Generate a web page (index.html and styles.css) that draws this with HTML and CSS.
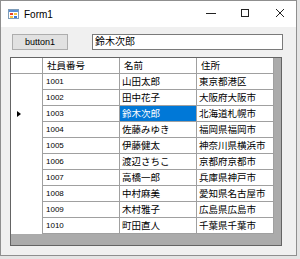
FILE: index.html
```html
<!DOCTYPE html>
<html lang="ja">
<head>
  <meta charset="UTF-8">
  <title>Form1</title>
  <link rel="stylesheet" href="styles.css">
</head>
<body>
  <div class="window">
    <!-- タイトルバー -->
    <div class="titlebar">
      <svg class="app-icon" width="11" height="10" viewBox="0 0 11 10">
        <rect x="0.5" y="0.5" width="10" height="9" fill="#fff" stroke="#7f9db9"/>
        <rect x="1" y="1" width="9" height="2" fill="#5b8fd6"/>
        <rect x="2" y="4" width="3" height="2" fill="#e8412c"/>
        <rect x="6" y="4" width="3" height="2" fill="#f6c244"/>
        <rect x="2" y="7" width="3" height="2" fill="#f6c244"/>
        <rect x="6" y="7" width="3" height="2" fill="#3c78d8"/>
      </svg>
      <span class="title">Form1</span>
      <div class="caption">
        <span class="cap-btn">
          <svg width="10" height="10" viewBox="0 0 10 10"><path d="M0 5.5H10" stroke="#222" stroke-width="1"/></svg>
        </span>
        <span class="cap-btn">
          <svg width="10" height="10" viewBox="0 0 10 10"><rect x="1.5" y="1.5" width="7" height="7" fill="none" stroke="#222" stroke-width="1"/></svg>
        </span>
        <span class="cap-btn">
          <svg width="10" height="10" viewBox="0 0 10 10"><path d="M1 1L9 9M9 1L1 9" stroke="#222" stroke-width="1"/></svg>
        </span>
      </div>
    </div>

    <!-- クライアント領域 -->
    <div class="client">
      <div class="toolbar">
        <button type="button" class="button">button1</button>
        <div class="textbox">鈴木次郎</div>
      </div>

      <div class="grid">
        <div class="rows">
          <div class="cell head corner"></div>
          <div class="cell head">社員番号</div>
          <div class="cell head">名前</div>
          <div class="cell head">住所</div>

          <div class="cell rowhead"></div>
          <div class="cell num">1001</div>
          <div class="cell">山田太郎</div>
          <div class="cell">東京都港区</div>

          <div class="cell rowhead"></div>
          <div class="cell num">1002</div>
          <div class="cell">田中花子</div>
          <div class="cell">大阪府大阪市</div>

          <div class="cell rowhead current"><span class="arrow"></span></div>
          <div class="cell num">1003</div>
          <div class="cell selected">鈴木次郎</div>
          <div class="cell">北海道札幌市</div>

          <div class="cell rowhead"></div>
          <div class="cell num">1004</div>
          <div class="cell">佐藤みゆき</div>
          <div class="cell">福岡県福岡市</div>

          <div class="cell rowhead"></div>
          <div class="cell num">1005</div>
          <div class="cell">伊藤健太</div>
          <div class="cell">神奈川県横浜市</div>

          <div class="cell rowhead"></div>
          <div class="cell num">1006</div>
          <div class="cell">渡辺さちこ</div>
          <div class="cell">京都府京都市</div>

          <div class="cell rowhead"></div>
          <div class="cell num">1007</div>
          <div class="cell">高橋一郎</div>
          <div class="cell">兵庫県神戸市</div>

          <div class="cell rowhead"></div>
          <div class="cell num">1008</div>
          <div class="cell">中村麻美</div>
          <div class="cell">愛知県名古屋市</div>

          <div class="cell rowhead"></div>
          <div class="cell num">1009</div>
          <div class="cell">木村雅子</div>
          <div class="cell">広島県広島市</div>

          <div class="cell rowhead"></div>
          <div class="cell num">1010</div>
          <div class="cell">町田直人</div>
          <div class="cell">千葉県千葉市</div>
        </div>
      </div>
    </div>
  </div>
</body>
</html>
```

FILE: styles.css
```css
/* 全体 */
* {
  margin: 0;
  padding: 0;
  box-sizing: border-box;
}

body {
  width: 300px;
  height: 259px;
  background-color: #e4e4e4;
  font-family: "Liberation Sans", "Noto Sans CJK JP", sans-serif;
  overflow: hidden;
}

.window {
  width: 297px;
  height: 256px;
  border: 1px solid #8f8f8f;
  background-color: #f0f0f0;
  display: flex;
  flex-direction: column;
}

/* タイトルバー */
.titlebar {
  height: 26px;
  background-color: #fff;
  display: flex;
  align-items: center;
}

.app-icon {
  margin-left: 7px;
  margin-top: -1px;
}

.title {
  margin-left: 5px;
  font-size: 10px;
  color: #000;
}

.caption {
  margin-left: auto;
  display: flex;
  height: 100%;
}

.cap-btn {
  width: 34.5px;
  display: flex;
  align-items: center;
  justify-content: center;
  padding-left: 2px;
  margin-top: -2px;
}

/* クライアント領域 */
.client {
  flex: 1;
  padding: 7px 0 0 9px;
}

.toolbar {
  display: flex;
  gap: 24px;
  margin-left: 2px;
}

.button {
  width: 56px;
  height: 16px;
  border: 1px solid #adadad;
  background-color: #e1e1e1;
  font-family: "Liberation Sans", sans-serif;
  font-size: 9px;
  color: #000;
}

.textbox {
  width: 191px;
  height: 16px;
  border: 1px solid #7a7a7a;
  background-color: #fff;
  font-size: 10px;
  line-height: 14px;
  padding-left: 2px;
}

/* DataGridView */
.grid {
  margin-top: 7px;
  width: 272px;
  height: 189px;
  border: 1px solid #646464;
  background-color: #ababab;
}

.rows {
  width: 263px;
  display: grid;
  grid-template-columns: 32px 77px 77px 77px;
  grid-auto-rows: 16px;
  background-color: #fff;
}

.cell {
  border-right: 1px solid #a0a0a0;
  border-bottom: 1px solid #a0a0a0;
  font-size: 9.5px;
  line-height: 15px;
  padding-left: 2px;
  white-space: nowrap;
  overflow: hidden;
  color: #000;
}

.cell.head {
  padding-left: 4px;
}

.cell.num {
  font-size: 8px;
  padding-left: 3px;
}

.cell.rowhead {
  border-bottom: none;
  position: relative;
}

.cell.selected {
  background-color: #0078d7;
  color: #fff;
}

.arrow {
  position: absolute;
  left: 6px;
  top: 5px;
  border-top: 3px solid transparent;
  border-bottom: 3px solid transparent;
  border-left: 4px solid #000;
}
```
